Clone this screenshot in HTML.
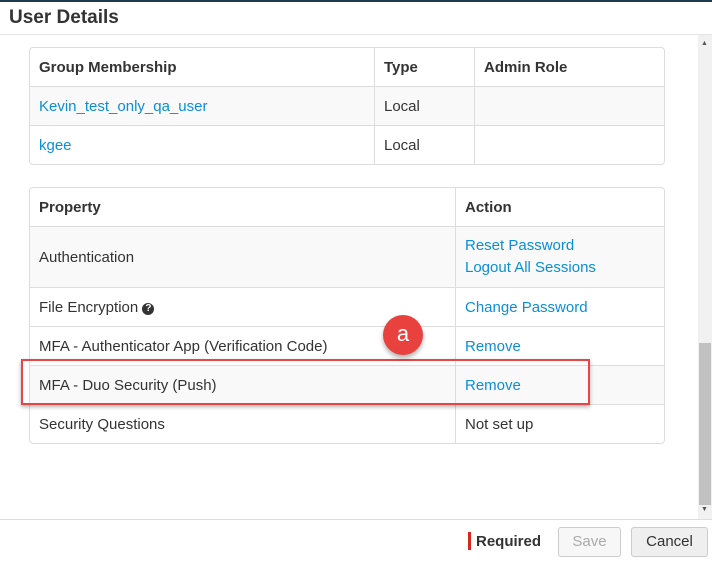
<!DOCTYPE html>
<html><head><style>
body{margin:0;width:712px;height:564px;overflow:hidden;background:#fff;font-family:"Liberation Sans",sans-serif;font-size:15px;color:#333;position:relative}
.top{position:absolute;left:0;top:0;width:712px;height:2px;background:#1d3b4c}
.hdr{position:absolute;left:0;top:2px;width:712px;height:32px;border-bottom:1px solid #e5e5e5}
.hdr span{position:absolute;left:9px;top:5px;font-size:19px;font-weight:bold;color:#333}
table{position:absolute;left:29px;width:636px;border-collapse:separate;border-spacing:0;border:1px solid #ddd;border-radius:4px}
td,th{border-top:1px solid #ddd;border-left:1px solid #ddd;padding:0 9px;text-align:left;height:38px}
tr:first-child td,tr:first-child th{border-top:none}
td:first-child,th:first-child{border-left:none}
th{font-weight:bold}
.g td{background:#f9f9f9}
a{color:#0a8fd6;text-decoration:none}
.sb{position:absolute;left:698px;top:35px;width:14px;height:484px;background:#f1f1f1}
.th{position:absolute;left:699px;top:343px;width:12px;height:162px;background:#c1c1c1}
.ft{position:absolute;left:0;top:519px;width:712px;height:45px;background:#fff;border-top:1px solid #ddd}
.btn{position:absolute;top:527px;height:30px;border:1px solid #ccc;border-radius:3px;box-sizing:border-box;text-align:center;line-height:28px;font-size:15px}
</style></head><body>
<div class="top"></div>
<div class="hdr"><span>User Details</span></div>
<table style="top:47px">
<tr><th style="width:326px;height:38px">Group Membership</th><th style="width:81px">Type</th><th>Admin Role</th></tr>
<tr class="g"><td><a>Kevin_test_only_qa_user</a></td><td>Local</td><td></td></tr>
<tr><td><a>kgee</a></td><td>Local</td><td></td></tr>
</table>
<table style="top:187px">
<tr><th style="width:407px;height:38px">Property</th><th>Action</th></tr>
<tr class="g"><td style="height:60px">Authentication</td><td style="line-height:22px"><a>Reset Password</a><br><a>Logout All Sessions</a></td></tr>
<tr><td>File Encryption <span style="display:inline-block;width:12px;height:12px;border-radius:50%;background:#333;color:#fff;font-size:10px;font-weight:bold;text-align:center;line-height:12px;vertical-align:1px">?</span></td><td><a>Change Password</a></td></tr>
<tr><td>MFA - Authenticator App (Verification Code)</td><td><a>Remove</a></td></tr>
<tr class="g"><td>MFA - Duo Security (Push)</td><td><a>Remove</a></td></tr>
<tr><td>Security Questions</td><td>Not set up</td></tr>
</table>
<div style="position:absolute;left:21px;top:359px;width:565px;height:42px;border:2px solid #e84545;box-shadow:0 2px 4px rgba(0,0,0,.3)"></div>
<div style="position:absolute;left:383px;top:315px;width:40px;height:40px;border-radius:50%;background:#e8413e;box-shadow:0 3px 5px rgba(0,0,0,.3);color:#fff;font-size:22px;text-align:center;line-height:38px">a</div>
<div class="sb"></div><div class="th"></div>
<div style="position:absolute;left:701px;top:40px;font-size:7px;color:#555">▲</div>
<div style="position:absolute;left:701px;top:506px;font-size:7px;color:#555">▼</div>
<div class="ft"></div>
<div style="position:absolute;left:468px;top:532px;width:3px;height:18px;background:#d9261c"></div>
<div style="position:absolute;left:476px;top:533px;font-weight:bold;font-size:15px">Required</div>
<div class="btn" style="left:558px;width:63px;color:#aaa;background:#f7f7f7">Save</div>
<div class="btn" style="left:631px;width:77px;background:#efefef;color:#333">Cancel</div>
</body></html>
